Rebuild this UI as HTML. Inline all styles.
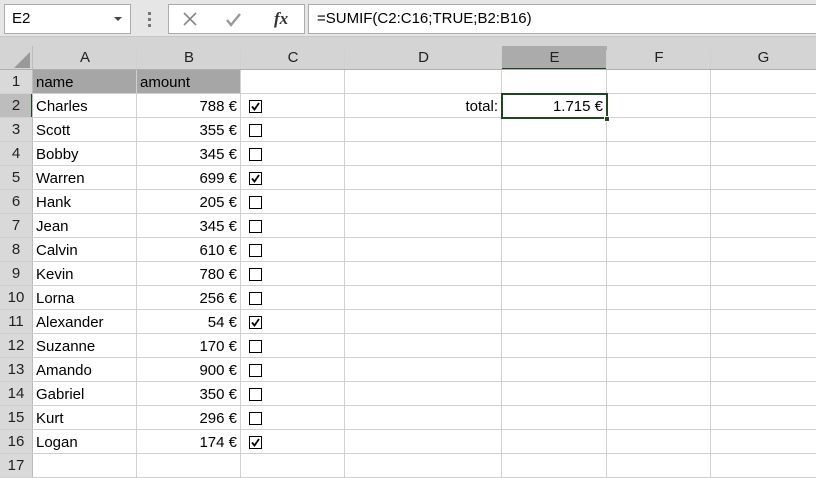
<!DOCTYPE html>
<html><head><meta charset="utf-8"><style>
*{box-sizing:border-box;margin:0;padding:0}
body{width:816px;height:477px;overflow:hidden;background:#fff;font-family:"Liberation Sans",sans-serif;position:relative}
.tb{position:absolute;left:0;top:0;width:816px;height:37px;background:#e6e6e6;border-bottom:1px solid #c6c6c6}
.strip{position:absolute;left:0;top:37px;width:816px;height:9px;background:#d4d4d4}
.box{position:absolute;top:4px;height:30px;background:#fff;border:1px solid #ababab;font-size:15px;line-height:28px}
.c{position:absolute;font-size:15px;line-height:24px;white-space:nowrap;color:#000}
.h{position:absolute;background:#d4d4d4;font-size:15px;text-align:center;color:#222}
.vl{position:absolute;width:1px;background:#d4d4d4}
.hl{position:absolute;height:1px;background:#d4d4d4}
.cb{position:absolute;width:13px;height:13px;border:1px solid #000;background:#fff}
.cb svg{position:absolute;left:0px;top:0px}
</style></head><body>
<div class="tb"></div>
<div class="strip"></div>
<div class="box" style="left:4px;width:127px;padding-left:7px">E2<span style="position:absolute;right:8px;top:12px;width:0;height:0;border-left:4px solid transparent;border-right:4px solid transparent;border-top:4px solid #444"></span></div>
<div style="position:absolute;left:148px;top:12px;width:3px;height:3px;background:#777;box-shadow:0 6px 0 #777,0 12px 0 #777"></div>
<div class="box" style="left:168px;width:137px">
<svg width="137" height="28" style="position:absolute;left:0;top:0"><path d="M15 8l12 12M27 8L15 20" stroke="#888" stroke-width="1.6" fill="none"/><path d="M58 15l4 5 9-11" stroke="#999" stroke-width="2.4" fill="none"/></svg>
<span style="position:absolute;left:105px;top:0;font-family:'Liberation Serif',serif;font-style:italic;font-weight:bold;font-size:17px;color:#333">fx</span></div>
<div class="box" style="left:308px;width:510px;padding-left:8px">=SUMIF(C2:C16;TRUE;B2:B16)</div>

<div class="h" style="left:0;top:46px;width:33px;height:24px"></div>
<svg style="position:absolute;left:14px;top:52px" width="16" height="16"><path d="M16 0V16H0Z" fill="#999"/></svg>
<div class="h" style="left:33px;top:46px;width:104px;height:24px;line-height:24px">A</div>
<div class="h" style="left:137px;top:46px;width:104px;height:24px;line-height:24px">B</div>
<div class="h" style="left:241px;top:46px;width:104px;height:24px;line-height:24px">C</div>
<div class="h" style="left:345px;top:46px;width:157px;height:24px;line-height:24px">D</div>
<div class="h" style="left:502px;top:46px;width:105px;height:24px;line-height:24px;background:#ababab;border-bottom:2px solid #1e4620">E</div>
<div class="h" style="left:607px;top:46px;width:104px;height:24px;line-height:24px">F</div>
<div class="h" style="left:711px;top:46px;width:105px;height:24px;line-height:24px">G</div>
<div style="position:absolute;left:0;top:70px;width:33px;height:407px;background:#d9d9d9"></div>
<div style="position:absolute;left:0;top:94px;width:33px;height:24px;background:#bdbdbd;border-right:2px solid #1e4620"></div>
<div style="position:absolute;left:33px;top:70px;width:208px;height:24px;background:#a6a6a6"></div>

<div id="g"></div>
<script>
var cols=[0,33,137,241,345,502,607,711];
var h='';
for(var i=1;i<cols.length;i++)h+='<div class="vl" style="left:'+(cols[i]-1)+'px;top:'+(i==1?46:50)+'px;height:'+(i==1?431:427)+'px;background:'+(i==1?'#bcbcbc':'#d0d0d0')+'"></div>';
for(var r=0;r<=17;r++){var y=69+r*24;h+='<div class="hl" style="left:0;top:'+y+'px;width:816px;background:'+(r==0?'#b0b0b0':'#d0d0d0')+'"></div>';}
var d=[["name","amount",null],["Charles",788,1],["Scott",355,0],["Bobby",345,0],["Warren",699,1],["Hank",205,0],["Jean",345,0],["Calvin",610,0],["Kevin",780,0],["Lorna",256,0],["Alexander",54,1],["Suzanne",170,0],["Amando",900,0],["Gabriel",350,0],["Kurt",296,0],["Logan",174,1]];
for(var r=1;r<=17;r++){var y=70+(r-1)*24;
h+='<div class="c" style="left:0;width:32px;text-align:center;top:'+y+'px;color:#222">'+r+'</div>';
if(r<=16){var q=d[r-1];
h+='<div class="c" style="left:36px;top:'+(y+1)+'px">'+q[0]+'</div>';
if(r==1)h+='<div class="c" style="left:140px;top:'+(y+1)+'px">'+q[1]+'</div>';
else{h+='<div class="c" style="left:137px;width:100px;text-align:right;top:'+(y+1)+'px">'+q[1]+' €</div>';
h+='<div class="cb" style="left:249px;top:'+(y+6)+'px">'+(q[2]?'<svg width="11" height="11"><path d="M2 5.5l2.5 3L9 2" stroke="#000" stroke-width="1.8" fill="none"/></svg>':'')+'</div>';}}}
h+='<div class="c" style="left:345px;width:153px;text-align:right;top:95px">total:</div>';
h+='<div style="position:absolute;left:501px;top:93px;width:107px;height:26px;border:2px solid #1e4620"></div>';
h+='<div style="position:absolute;left:604px;top:116px;width:6px;height:6px;background:#1e4620;border:1px solid #fff"></div>';
h+='<div class="c" style="left:502px;width:101px;text-align:right;top:95px">1.715 €</div>';
document.getElementById('g').innerHTML=h;
</script>
</body></html>
